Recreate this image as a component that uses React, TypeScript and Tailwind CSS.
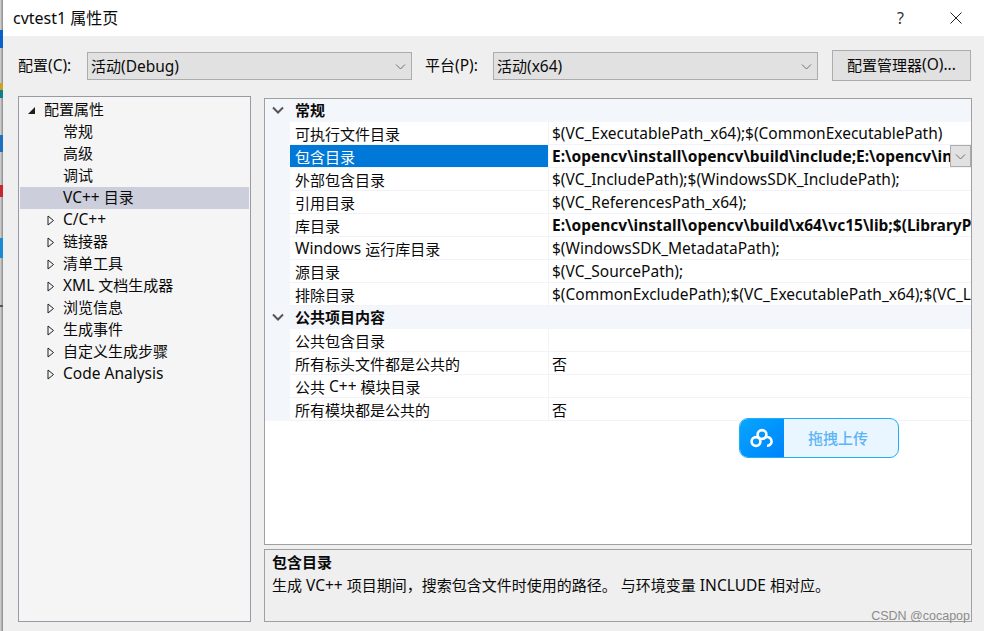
const font = "font-['Noto_Sans','Noto_Sans_CJK_SC',sans-serif]";

function L({ s }: { s: string }) {
  const parts = s.split(/([\x20-\x7e]+)/).filter(Boolean);
  return (
    <>
      {parts.map((p, i) =>
        /^[\x20-\x7e]+$/.test(p) ? (
          <span key={i} className="text-[15.5px]">{p}</span>
        ) : (
          <span key={i}>{p}</span>
        )
      )}
    </>
  );
}

function Chevron({ color = "#606060", size = 11 }: { color?: string; size?: number }) {
  return (
    <svg width={size} height={size} viewBox="0 0 11 11" fill="none" stroke={color} strokeWidth="1">
      <path d="M1 3.5 L5.5 8 L10 3.5" />
    </svg>
  );
}

function Combo({ text, className }: { text: string; className: string }) {
  return (
    <div className={`flex h-[28px] items-center justify-between border border-[#acacac] bg-[#e1e1e1] pl-[3px] pr-[5px] ${className}`}>
      <span className="pt-[1px]"><L s={text} /></span>
      <Chevron color="#707070" />
    </div>
  );
}

function TreeRow({ label, arrow, selected }: { label: string; arrow?: "open" | "closed"; selected?: boolean }) {
  return (
    <div className={`flex h-[22px] items-center whitespace-pre ${selected ? "bg-[#cccedb]" : ""}`}>
      <span className={`flex justify-end pr-[8px] ${arrow === "open" ? "w-[24px]" : "w-[43px]"}`}>
        {arrow === "open" && (
          <svg width="9" height="9" viewBox="0 0 9 9"><path d="M8 1 V8 H1 Z" fill="#1e1e1e" /></svg>
        )}
        {arrow === "closed" && (
          <svg width="8" height="11" viewBox="0 0 8 11" fill="none" stroke="#1e1e1e"><path d="M1 1 L6.5 5.5 L1 10 Z" /></svg>
        )}
      </span>
      <span className="mb-[1px]"><L s={label} /></span>
    </div>
  );
}

function Section({ title }: { title: string }) {
  return (
    <div className="flex h-[23px] items-center bg-[#f3f6fb] font-bold">
      <span className="flex w-[25px] justify-center pl-[1px]">
        <svg width="12" height="9" viewBox="0 0 12 9" fill="none" stroke="#555" strokeWidth="2"><path d="M1 1.5 L6 6.5 L11 1.5" /></svg>
      </span>
      <span className="pl-[5px]">{title}</span>
    </div>
  );
}

function PropRow({ name, value, bold, selected }: { name: string; value?: string; bold?: boolean; selected?: boolean }) {
  return (
    <div className="flex h-[23px] bg-[#f3f6fb]">
      <div className="w-[25px] shrink-0" />
      <div className="flex min-w-0 flex-1 border-b border-[#f1f3f8] bg-white">
        <div className={`flex h-full w-[258px] shrink-0 items-center whitespace-pre pl-[5px] pt-[2px] ${selected ? "bg-[#0078d7] text-white" : ""}`}>
          <L s={name} />
        </div>
        <div className={`flex min-w-0 flex-1 items-center overflow-hidden whitespace-pre border-l border-[#f1f3f8] pl-[3px] pt-[2px] ${bold ? "font-bold" : ""}`}>
          <L s={value ?? ""} />
        </div>
        {selected && (
          <div className="flex h-[22px] w-[21px] shrink-0 items-center justify-center border border-[#acacac] bg-[#e1e1e1]">
            <Chevron color="#707070" />
          </div>
        )}
      </div>
    </div>
  );
}

const marks = [
  { top: 30, h: 18, c: "#0a5fc8" },
  { top: 83, h: 7, c: "#c9a227" },
  { top: 90, h: 8, c: "#0f7f8a" },
  { top: 135, h: 17, c: "#1f6fc0" },
  { top: 185, h: 12, c: "#c8282d" },
  { top: 238, h: 20, c: "#1a8ad4" },
  { top: 305, h: 2, c: "#555555" },
];

export default function App() {
  return (
    <div className={`relative flex h-[631px] w-[984px] flex-col overflow-hidden bg-[#efefef] text-[15px] leading-none text-[#0a0a0a] ${font}`}>
      <div className="flex h-[36px] shrink-0 items-center justify-between bg-white pl-[13px] pr-[22px]">
        <span className="text-[16px]">cvtest1 属性页</span>
        <div className="flex items-center gap-[46px]">
          <span className="text-[16px] text-[#333]">?</span>
          <svg width="12" height="12" viewBox="0 0 12 12" fill="none" stroke="#222" strokeWidth="1"><path d="M0.5 0.5 L11.5 11.5 M11.5 0.5 L0.5 11.5" /></svg>
        </div>
      </div>

      <div className="flex h-[60px] shrink-0 items-center pl-[18px]">
        <span className="w-[69px]"><L s="配置(C):" /></span>
        <Combo text="活动(Debug)" className="w-[325px]" />
        <span className="ml-[13px] w-[68px]"><L s="平台(P):" /></span>
        <Combo text="活动(x64)" className="w-[325px]" />
        <div className="mb-[1px] ml-[14px] flex h-[31px] w-[139px] items-center justify-center border border-[#acacac] bg-[#e1e1e1] pb-[1px]"><L s="配置管理器(O)..." /></div>
      </div>

      <div className="flex min-h-0 flex-1 pb-[9px] pl-[18px] pr-[12px]">
        <div className="w-[233px] shrink-0 border border-[#9a9aa5] bg-[#f5f5f5] pl-[1px] pr-[1px] pt-[2px]">
          <TreeRow label="配置属性" arrow="open" />
          <TreeRow label="常规" />
          <TreeRow label="高级" />
          <TreeRow label="调试" />
          <TreeRow label="VC++ 目录" selected />
          <TreeRow label="C/C++" arrow="closed" />
          <TreeRow label="链接器" arrow="closed" />
          <TreeRow label="清单工具" arrow="closed" />
          <TreeRow label="XML 文档生成器" arrow="closed" />
          <TreeRow label="浏览信息" arrow="closed" />
          <TreeRow label="生成事件" arrow="closed" />
          <TreeRow label="自定义生成步骤" arrow="closed" />
          <TreeRow label="Code Analysis" arrow="closed" />
        </div>

        <div className="ml-[13px] flex min-w-0 flex-1 flex-col pt-[2px]">
          <div className="h-[447px] shrink-0 overflow-hidden border border-[#a0a0a0] bg-white">
            <Section title="常规" />
            <PropRow name="可执行文件目录" value="$(VC_ExecutablePath_x64);$(CommonExecutablePath)" />
            <PropRow name="包含目录" value="E:\opencv\install\opencv\build\include;E:\opencv\include" bold selected />
            <PropRow name="外部包含目录" value="$(VC_IncludePath);$(WindowsSDK_IncludePath);" />
            <PropRow name="引用目录" value="$(VC_ReferencesPath_x64);" />
            <PropRow name="库目录" value="E:\opencv\install\opencv\build\x64\vc15\lib;$(LibraryPath)" bold />
            <PropRow name="Windows 运行库目录" value="$(WindowsSDK_MetadataPath);" />
            <PropRow name="源目录" value="$(VC_SourcePath);" />
            <PropRow name="排除目录" value="$(CommonExcludePath);$(VC_ExecutablePath_x64);$(VC_LibraryPath_x64)" />
            <Section title="公共项目内容" />
            <PropRow name="公共包含目录" />
            <PropRow name="所有标头文件都是公共的" value="否" />
            <PropRow name="公共 C++ 模块目录" />
            <PropRow name="所有模块都是公共的" value="否" />
          </div>
          <div className="mt-[4px] flex-1 border border-[#a0a0a0] pl-[7px] pt-[2px]">
            <div className="font-bold leading-[20px]">包含目录</div>
            <div className="leading-[26px]"><L s="生成 VC++ 项目期间，搜索包含文件时使用的路径。 与环境变量 INCLUDE 相对应。" /></div>
          </div>
        </div>
      </div>

      <div className="absolute left-0 top-0 h-full w-[3px] bg-gradient-to-r from-[#d8d8d8] to-[#8a8a8a]">
        {marks.map((m) => (
          <div key={m.top} className="absolute left-0 w-full" style={{ top: m.top, height: m.h, background: m.c }} />
        ))}
      </div>

      <div className="absolute left-[739px] top-[418px] flex h-[40px] w-[160px] overflow-hidden rounded-[9px] border border-[#1cb0fb] bg-[#e9f6ff]">
        <div className="flex w-[44px] items-center justify-center bg-gradient-to-br from-[#0aa5ff] to-[#0083fb]">
          <svg width="24" height="20" viewBox="0 0 24 20" fill="none" stroke="white" strokeWidth="2.6">
            <circle cx="12" cy="6.5" r="4.4" />
            <circle cx="6" cy="13.5" r="4.4" />
            <path d="M13.5 11 A4.4 4.4 0 1 1 17 17.8" />
          </svg>
        </div>
        <div className="flex flex-1 items-center justify-center pr-[6px] text-[15px] font-medium text-[#5db4f5]">拖拽上传</div>
      </div>

      <div className="absolute bottom-[9px] right-[14px] font-['Liberation_Sans',sans-serif] text-[12.5px] text-[#8c8c8c]">CSDN @cocapop</div>
    </div>
  );
}
